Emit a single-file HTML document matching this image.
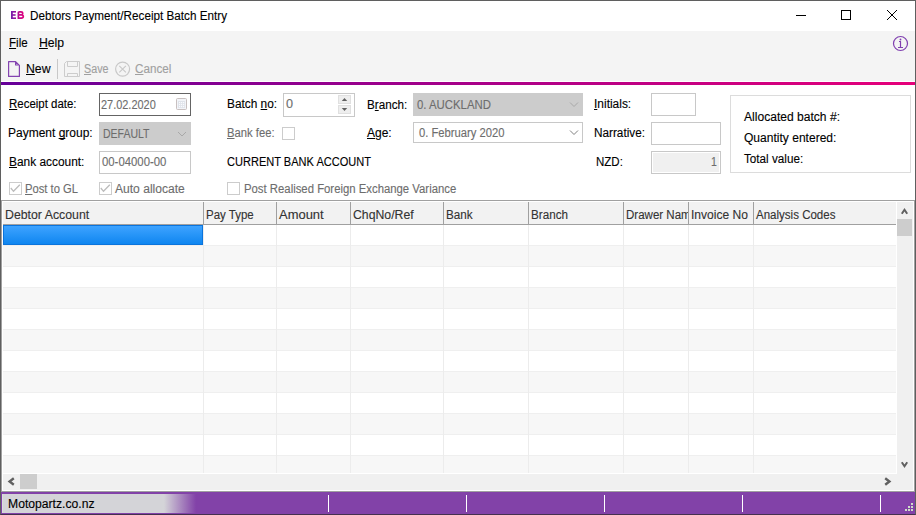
<!DOCTYPE html>
<html><head><meta charset="utf-8"><style>
html,body{margin:0;padding:0;width:916px;height:515px;overflow:hidden;background:#fff;}
body{position:relative;font-family:"Liberation Sans",sans-serif;font-size:12px;}
.a{position:absolute;box-sizing:border-box;}
.t{position:absolute;white-space:pre;line-height:normal;transform-origin:0 0;font-size:12px;-webkit-text-stroke:0.12px currentColor;}
u{text-decoration:underline;text-underline-offset:1px;text-decoration-skip-ink:none;}
svg{position:absolute;overflow:visible;}
</style></head><body>
<!-- window border -->
<div class="a" style="left:0;top:0;width:916px;height:515px;border:1px solid #5f5f5f;border-bottom-color:#45304f;background:#fff"></div>
<!-- menu+toolbar bg -->
<div class="a" style="left:1px;top:31px;width:914px;height:50px;background:#f4f4f4"></div>
<!-- gradient bar -->
<div class="a" style="left:1px;top:82px;width:914px;height:3px;background:linear-gradient(90deg,#660099,#e6007a)"></div>
<!-- EB icon -->
<svg style="left:0;top:0" width="40" height="30">
 <defs><linearGradient id="eb" x1="10" y1="0" x2="24" y2="0" gradientUnits="userSpaceOnUse"><stop offset="0" stop-color="#6a1fb0"/><stop offset="1" stop-color="#e6007a"/></linearGradient></defs>
 <g fill="url(#eb)">
  <rect x="11" y="11" width="1.8" height="8"/>
  <rect x="11" y="11" width="5" height="1.6"/>
  <rect x="11" y="14.2" width="4.6" height="1.6"/>
  <rect x="11" y="17.4" width="5" height="1.6"/>
 </g>
 <path d="M18.4 11.8 H21 Q22.7 11.8 22.7 13.4 Q22.7 14.9 21 14.9 H18.4 M18.4 14.9 H21.3 Q23.3 14.9 23.3 16.6 Q23.3 18.2 21.3 18.2 H18.4 V11.8" fill="none" stroke="url(#eb)" stroke-width="1.7"/>
</svg>
<!-- window controls -->
<svg style="left:0;top:0" width="916" height="40">
 <line x1="796" y1="15.5" x2="806" y2="15.5" stroke="#000" stroke-width="1"/>
 <rect x="841.5" y="10.5" width="9" height="9" fill="none" stroke="#000" stroke-width="1"/>
 <line x1="887" y1="10" x2="897" y2="20" stroke="#000" stroke-width="1"/>
 <line x1="897" y1="10" x2="887" y2="20" stroke="#000" stroke-width="1"/>
</svg>
<!-- info icon -->
<svg style="left:0;top:0" width="916" height="60">
 <circle cx="900.5" cy="43.5" r="7" fill="none" stroke="#8040b0" stroke-width="1.2"/>
 <circle cx="900.5" cy="39.5" r="0.9" fill="#8040b0"/>
 <line x1="900.5" y1="41.5" x2="900.5" y2="47.5" stroke="#8040b0" stroke-width="1.2"/>
 <line x1="898" y1="47.5" x2="903" y2="47.5" stroke="#8040b0" stroke-width="1"/>
 <line x1="899" y1="41.5" x2="901" y2="41.5" stroke="#8040b0" stroke-width="1"/>
</svg>
<!-- toolbar icons -->
<svg style="left:0;top:0" width="200" height="90">
 <path d="M8.6 61.6 H15.6 L19.4 65.4 V76.4 H8.6 Z M15.6 61.6 V65 H19.4" fill="none" stroke="#8444b0" stroke-width="1.2" stroke-linejoin="round"/>
 <line x1="57.5" y1="59" x2="57.5" y2="79" stroke="#c8c8c8" stroke-width="1"/>
 <path d="M66.5 61.5 H79.5 V76.5 H64.5 V63.5 Z M67.5 61.5 V66.5 H77.5 V61.5 M67.5 76.5 V73.5 H77.5 V76.5" fill="none" stroke="#cccccc" stroke-width="1"/>
 <circle cx="122.6" cy="69.1" r="7" fill="none" stroke="#c8c8c8" stroke-width="1.2"/>
 <path d="M119.3 65.8 L125.9 72.4 M125.9 65.8 L119.3 72.4" stroke="#c8c8c8" stroke-width="1.1"/>
</svg>

<!-- form controls -->
<div class="a" style="left:99px;top:93px;width:92px;height:23px;border:1px solid #646464;background:#fff"></div>
<svg style="left:0;top:0" width="200" height="200">
 <rect x="176.5" y="98.5" width="10" height="11" rx="1" fill="#f2f4f8" stroke="#c8c0c0"/>
 <rect x="178" y="101" width="7" height="7" fill="#dfe3ea"/>
 <g fill="#fafbfd"><rect x="179" y="102" width="1.2" height="1.2"/><rect x="181" y="102" width="1.2" height="1.2"/><rect x="183" y="102" width="1.2" height="1.2"/>
 <rect x="179" y="104" width="1.2" height="1.2"/><rect x="181" y="104" width="1.2" height="1.2"/><rect x="183" y="104" width="1.2" height="1.2"/>
 <rect x="179" y="106" width="1.2" height="1.2"/><rect x="181" y="106" width="1.2" height="1.2"/><rect x="183" y="106" width="1.2" height="1.2"/></g>
</svg>
<div class="a" style="left:99px;top:122px;width:92px;height:23px;background:#cccccc"></div>

<div class="a" style="left:99px;top:151px;width:92px;height:23px;border:1px solid #c8c8c8;background:#fff"></div>
<!-- checkboxes -->
<div class="a" style="left:9px;top:182px;width:13px;height:13px;border:1px solid #cccccc"></div>
<div class="a" style="left:99px;top:182px;width:13px;height:13px;border:1px solid #cccccc"></div>
<svg style="left:0;top:0" width="200" height="200">
 <path d="M10.8 188 L13.5 191.3 L19.8 184.8" fill="none" stroke="#bcbcbc" stroke-width="1.3"/>
 <path d="M100.8 188 L103.5 191.3 L109.8 184.8" fill="none" stroke="#bcbcbc" stroke-width="1.3"/>
</svg>
<div class="a" style="left:227px;top:182px;width:13px;height:13px;border:1px solid #cccccc"></div>
<div class="a" style="left:282px;top:127px;width:13px;height:13px;border:1px solid #cccccc"></div>
<!-- spinner -->
<div class="a" style="left:283px;top:93px;width:72px;height:24px;border:1px solid #c8c8c8;background:#fff"></div>
<div class="a" style="left:338px;top:95px;width:13px;height:9px;background:#eeeeee;border:1px solid #e0e0e0"></div>
<div class="a" style="left:338px;top:105px;width:13px;height:9px;background:#eeeeee;border:1px solid #e0e0e0"></div>
<svg style="left:0;top:0" width="400" height="200">
 <path d="M341.8 101 L344.5 98 L347.2 101 Z" fill="#606060"/>
 <path d="M341.8 108 L344.5 111 L347.2 108 Z" fill="#606060"/>
</svg>
<!-- branch/age combos -->
<div class="a" style="left:413px;top:93px;width:170px;height:23px;background:#cccccc"></div>
<div class="a" style="left:413px;top:122px;width:170px;height:21px;border:1px solid #c8c8c8;background:#fff"></div>
<svg style="left:0;top:0" width="600" height="200">
 <path d="M178 132 L182 136 L186 132" fill="none" stroke="#a8a8a8" stroke-width="1"/>
 <path d="M570 102.5 L574 106.5 L578 102.5" fill="none" stroke="#a8a8a8" stroke-width="1"/>
 <path d="M570 130.5 L574 134.5 L578 130.5" fill="none" stroke="#808080" stroke-width="1"/>
</svg>
<!-- initials etc -->
<div class="a" style="left:651px;top:93px;width:45px;height:23px;border:1px solid #c8c8c8"></div>
<div class="a" style="left:651px;top:122px;width:70px;height:23px;border:1px solid #c8c8c8"></div>
<div class="a" style="left:651px;top:151px;width:70px;height:23px;border:1px solid #c8c8c8;background:#fff"></div><div class="a" style="left:653px;top:153px;width:66px;height:19px;background:#f0f0f0"></div>
<!-- group box -->
<div class="a" style="left:730px;top:95px;width:181px;height:78px;border:1px solid #dcdcdc"></div>

<!-- grid -->
<div class="a" style="left:1px;top:200px;width:914px;height:292px;border:1px solid #a0a0a0;background:#fff"></div>
<div class="a" style="left:3px;top:202px;width:893px;height:22px;background:#f2f2f2"></div>
<div class="a" style="left:3px;top:224px;width:893px;height:1px;background:#a0a0a0"></div>

<div class="a" style="left:3px;top:225px;width:893px;height:20px;background:#ffffff"></div>
<div class="a" style="left:3px;top:245px;width:893px;height:1px;background:#efefef"></div>
<div class="a" style="left:3px;top:246px;width:893px;height:20px;background:#f7f7f7"></div>
<div class="a" style="left:3px;top:266px;width:893px;height:1px;background:#efefef"></div>
<div class="a" style="left:3px;top:267px;width:893px;height:20px;background:#ffffff"></div>
<div class="a" style="left:3px;top:287px;width:893px;height:1px;background:#efefef"></div>
<div class="a" style="left:3px;top:288px;width:893px;height:20px;background:#f7f7f7"></div>
<div class="a" style="left:3px;top:308px;width:893px;height:1px;background:#efefef"></div>
<div class="a" style="left:3px;top:309px;width:893px;height:20px;background:#ffffff"></div>
<div class="a" style="left:3px;top:329px;width:893px;height:1px;background:#efefef"></div>
<div class="a" style="left:3px;top:330px;width:893px;height:20px;background:#f7f7f7"></div>
<div class="a" style="left:3px;top:350px;width:893px;height:1px;background:#efefef"></div>
<div class="a" style="left:3px;top:351px;width:893px;height:20px;background:#ffffff"></div>
<div class="a" style="left:3px;top:371px;width:893px;height:1px;background:#efefef"></div>
<div class="a" style="left:3px;top:372px;width:893px;height:20px;background:#f7f7f7"></div>
<div class="a" style="left:3px;top:392px;width:893px;height:1px;background:#efefef"></div>
<div class="a" style="left:3px;top:393px;width:893px;height:20px;background:#ffffff"></div>
<div class="a" style="left:3px;top:413px;width:893px;height:1px;background:#efefef"></div>
<div class="a" style="left:3px;top:414px;width:893px;height:20px;background:#f7f7f7"></div>
<div class="a" style="left:3px;top:434px;width:893px;height:1px;background:#efefef"></div>
<div class="a" style="left:3px;top:435px;width:893px;height:20px;background:#ffffff"></div>
<div class="a" style="left:3px;top:455px;width:893px;height:1px;background:#efefef"></div>
<div class="a" style="left:3px;top:456px;width:893px;height:17px;background:#f7f7f7"></div>
<div class="a" style="left:203px;top:225px;width:1px;height:248px;background:#ececec"></div>
<div class="a" style="left:203px;top:202px;width:1px;height:22px;background:#a0a0a0"></div>
<div class="a" style="left:276px;top:225px;width:1px;height:248px;background:#ececec"></div>
<div class="a" style="left:276px;top:202px;width:1px;height:22px;background:#a0a0a0"></div>
<div class="a" style="left:350px;top:225px;width:1px;height:248px;background:#ececec"></div>
<div class="a" style="left:350px;top:202px;width:1px;height:22px;background:#a0a0a0"></div>
<div class="a" style="left:443px;top:225px;width:1px;height:248px;background:#ececec"></div>
<div class="a" style="left:443px;top:202px;width:1px;height:22px;background:#a0a0a0"></div>
<div class="a" style="left:528px;top:225px;width:1px;height:248px;background:#ececec"></div>
<div class="a" style="left:528px;top:202px;width:1px;height:22px;background:#a0a0a0"></div>
<div class="a" style="left:623px;top:225px;width:1px;height:248px;background:#ececec"></div>
<div class="a" style="left:623px;top:202px;width:1px;height:22px;background:#a0a0a0"></div>
<div class="a" style="left:688px;top:225px;width:1px;height:248px;background:#ececec"></div>
<div class="a" style="left:688px;top:202px;width:1px;height:22px;background:#a0a0a0"></div>
<div class="a" style="left:753px;top:225px;width:1px;height:248px;background:#ececec"></div>
<div class="a" style="left:753px;top:202px;width:1px;height:22px;background:#a0a0a0"></div>
<div class="a" style="left:3px;top:225px;width:200px;height:20px;background:linear-gradient(#3ea3ff,#0f86f0);border:1px solid #0b74dc"></div>
<div class="a" style="left:626px;top:207.84px;width:62px;height:14px;overflow:hidden;color:#333;"><div class="t" style="left:0;top:0;transform:scaleX(0.96)">Drawer Name</div></div>
<!-- v scrollbar -->
<div class="a" style="left:897px;top:202px;width:16px;height:272px;background:#f0f0f0"></div>
<div class="a" style="left:897px;top:219px;width:15px;height:17px;background:#cdcdcd"></div>

<!-- h scrollbar -->
<div class="a" style="left:3px;top:474px;width:910px;height:16px;background:#f0f0f0"></div>
<div class="a" style="left:20px;top:474px;width:17px;height:15px;background:#cdcdcd"></div>
<svg style="left:0;top:0" width="916" height="515">
 <g fill="none" stroke="#606060" stroke-width="2" stroke-linecap="butt" stroke-linejoin="miter">
 <path d="M901.8 213.8 L904.5 209.8 L907.2 213.8"/>
 <path d="M901.8 462.2 L904.5 466.2 L907.2 462.2"/>
 <path d="M13.8 478.3 L9.6 481.5 L13.8 484.7" stroke-width="2.4"/>
 <path d="M885.2 478.3 L889.4 481.5 L885.2 484.7" stroke-width="2.4"/>
 </g>
</svg>

<!-- status bar -->
<div class="a" style="left:1px;top:492px;width:914px;height:22px;background:#8242a8"></div>
<div class="a" style="left:2px;top:494px;width:194px;height:19px;background:linear-gradient(90deg,#e4e8e4 0,#d4d4d8 1px,#d4d4d8 162px,#8242a8 194px)"></div>
<svg style="left:0;top:0" width="916" height="515">
 <g stroke="#fff" stroke-width="1">
  <line x1="328.5" y1="495" x2="328.5" y2="512"/>
  <line x1="466.5" y1="495" x2="466.5" y2="512"/>
  <line x1="604.5" y1="495" x2="604.5" y2="512"/>
  <line x1="742.5" y1="495" x2="742.5" y2="512"/>
  <line x1="880.5" y1="495" x2="880.5" y2="512"/>
 </g>
 <g fill="#d0dcc8">
  <rect x="911" y="503" width="2" height="2"/>
  <rect x="908" y="506" width="2" height="2"/><rect x="911" y="506" width="2" height="2"/>
  <rect x="905" y="509" width="2" height="2"/><rect x="908" y="509" width="2" height="2"/><rect x="911" y="509" width="2" height="2"/>
 </g>
</svg>
<div class="t" style="left:30.31px;top:9.14px;color:#000;transform:scaleX(0.9747)">Debtors Payment/Receipt Batch Entry</div>
<div class="t" style="left:8.82px;top:36.14px;color:#000;transform:scaleX(0.9649)"><u>F</u>ile</div>
<div class="t" style="left:38.89px;top:36.14px;color:#000;transform:scaleX(1.0174)"><u>H</u>elp</div>
<div class="t" style="left:26.09px;top:62.14px;color:#000;transform:scaleX(1.0210)"><u>N</u>ew</div>
<div class="t" style="left:83.75px;top:62.14px;color:#a0a0a0;transform:scaleX(0.8953)"><u>S</u>ave</div>
<div class="t" style="left:134.81px;top:62.14px;color:#a0a0a0;transform:scaleX(0.9736)"><u>C</u>ancel</div>
<div class="t" style="left:9.12px;top:97.14px;color:#000;transform:scaleX(0.9553)"><u>R</u>eceipt date:</div>
<div class="t" style="left:8.10px;top:126.14px;color:#000;transform:scaleX(0.9986)">Payment <u>g</u>roup:</div>
<div class="t" style="left:8.70px;top:155.14px;color:#000;transform:scaleX(0.9912)"><u>B</u>ank account:</div>
<div class="t" style="left:100.54px;top:97.74px;color:#6d6d6d;transform:scaleX(0.9109)">27.02.2020</div>
<div class="t" style="left:102.96px;top:126.94px;color:#6d6d6d;transform:scaleX(0.8748)">DEFAULT</div>
<div class="t" style="left:102.13px;top:155.14px;color:#6d6d6d;transform:scaleX(0.9454)">00-04000-00</div>
<div class="t" style="left:25.43px;top:181.64px;color:#6d6d6d;transform:scaleX(0.9335)"><u>P</u>ost to GL</div>
<div class="t" style="left:115.20px;top:181.64px;color:#6d6d6d;transform:scaleX(1.0060)">Auto allocate</div>
<div class="t" style="left:226.91px;top:97.14px;color:#000;transform:scaleX(0.9879)">Batch <u>n</u>o:</div>
<div class="t" style="left:285.77px;top:97.14px;color:#6d6d6d;transform:scaleX(1.0549)">0</div>
<div class="t" style="left:226.93px;top:126.14px;color:#6d6d6d;transform:scaleX(0.9376)"><u>B</u>ank fee:</div>
<div class="t" style="left:227.14px;top:155.14px;color:#000;transform:scaleX(0.9204)">CURRENT BANK ACCOUNT</div>
<div class="t" style="left:243.53px;top:182.14px;color:#6d6d6d;transform:scaleX(0.9451)">Post Realised Foreign Exchange Variance</div>
<div class="t" style="left:366.81px;top:97.54px;color:#000;transform:scaleX(0.9738)">B<u>r</u>anch:</div>
<div class="t" style="left:416.53px;top:97.54px;color:#6d6d6d;transform:scaleX(0.9477)">0. AUCKLAND</div>
<div class="t" style="left:366.80px;top:126.14px;color:#000;transform:scaleX(1.0005)"><u>A</u>ge:</div>
<div class="t" style="left:418.53px;top:126.14px;color:#6d6d6d;transform:scaleX(0.9359)">0. February 2020</div>
<div class="t" style="left:593.80px;top:97.14px;color:#000;transform:scaleX(0.9956)"><u>I</u>nitials:</div>
<div class="t" style="left:593.81px;top:125.74px;color:#000;transform:scaleX(0.9801)">Narrative:</div>
<div class="t" style="left:596.12px;top:154.84px;color:#000;transform:scaleX(0.9593)">NZD:</div>
<div class="t" style="left:711.06px;top:154.84px;color:#6d6d6d;transform:scaleX(0.8791)">1</div>
<div class="t" style="left:743.70px;top:109.64px;color:#000;transform:scaleX(1.0063)">Allocated batch #:</div>
<div class="t" style="left:743.70px;top:130.64px;color:#000;transform:scaleX(1.0037)">Quantity entered:</div>
<div class="t" style="left:743.71px;top:152.04px;color:#000;transform:scaleX(0.9748)">Total value:</div>
<div class="t" style="left:5.29px;top:207.84px;color:#333;transform:scaleX(1.0264)">Debtor Account</div>
<div class="t" style="left:205.92px;top:207.84px;color:#333;transform:scaleX(0.9567)">Pay Type</div>
<div class="t" style="left:278.86px;top:207.84px;color:#333;transform:scaleX(1.0803)">Amount</div>
<div class="t" style="left:352.89px;top:207.84px;color:#333;transform:scaleX(1.0210)">ChqNo/Ref</div>
<div class="t" style="left:445.71px;top:207.84px;color:#333;transform:scaleX(0.9750)">Bank</div>
<div class="t" style="left:531.01px;top:207.84px;color:#333;transform:scaleX(0.9722)">Branch</div>
<div class="t" style="left:691.10px;top:207.84px;color:#333;transform:scaleX(1.0035)">Invoice No</div>
<div class="t" style="left:756.22px;top:207.84px;color:#333;transform:scaleX(0.9606)">Analysis Codes</div>
<div class="t" style="left:7.99px;top:496.84px;color:#000;transform:scaleX(1.0133)">Motopartz.co.nz</div>
</body></html>
